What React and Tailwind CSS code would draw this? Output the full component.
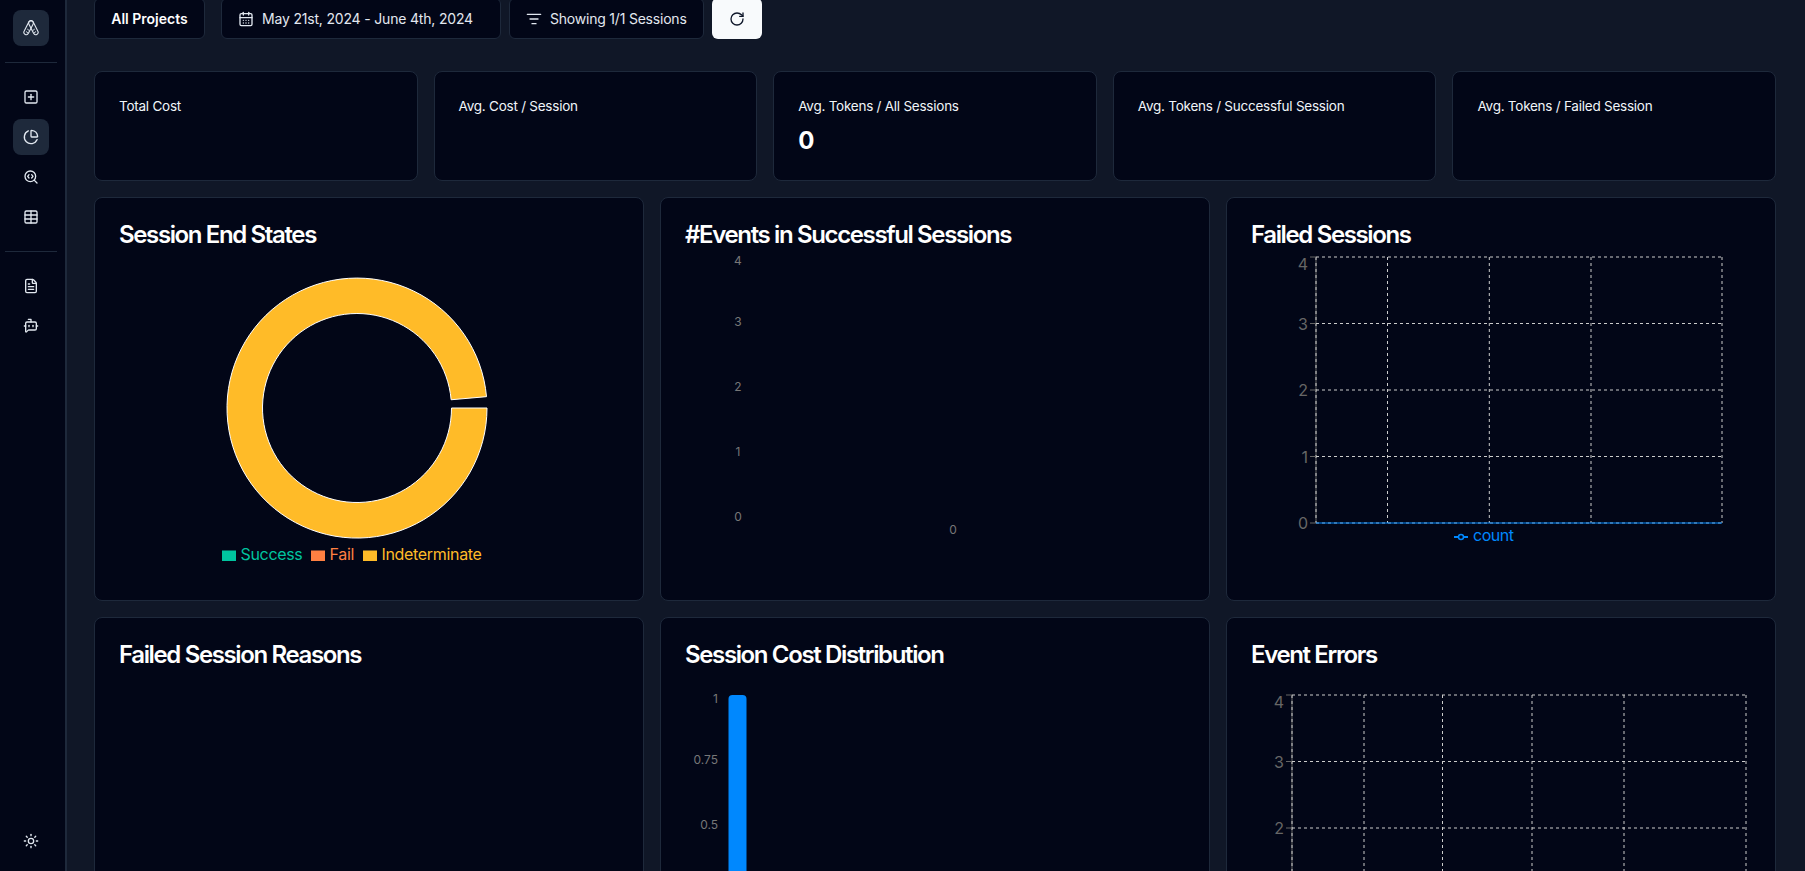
import React from 'react';
import {
    SquarePlus,
    ChartPie,
    SearchCode,
    Table,
    FileText,
    BotMessageSquare,
    Sun,
    CalendarDays,
    ListFilter,
    RotateCw,
} from 'lucide-react';

function Logo() {
    return (
        <svg width="18" height="16" viewBox="0 0 18 16" fill="none" stroke="#e2e8f0" strokeWidth="1.1">
            <rect x="6.6" y="0.8" width="4.8" height="15" rx="2.4" transform="rotate(27 9 3)" />
            <rect x="6.6" y="0.8" width="4.8" height="15" rx="2.4" transform="rotate(-27 9 3)" />
            <path d="M4 11.5 L6 13 M5.2 9 L7.2 10.5 M14 11.5 L12 13 M12.8 9 L10.8 10.5" strokeWidth="0.9" />
        </svg>
    );
}

function NavItem({ icon: Icon, active }) {
    return (
        <div className={`w-9 h-9 rounded-lg flex items-center justify-center text-slate-200 ${active ? 'bg-[#1e293b]' : ''}`}>
            <Icon size={16} />
        </div>
    );
}

function Sidebar() {
    return (
        <aside className="w-[67px] shrink-0 h-full bg-[#020617] border-r-2 border-[#1e293b] flex flex-col items-center pr-[3px]">
            <div className="w-9 h-9 mt-2.5 rounded-lg bg-[#1e293b] flex items-center justify-center">
                <Logo />
            </div>
            <div className="w-[52px] h-px bg-[#1e293b] mt-4 mb-4" />
            <div className="flex flex-col gap-1">
                <NavItem icon={SquarePlus} />
                <NavItem icon={ChartPie} active />
                <NavItem icon={SearchCode} />
                <NavItem icon={Table} />
            </div>
            <div className="w-[52px] h-px bg-[#1e293b] mt-4 mb-4" />
            <div className="flex flex-col gap-1">
                <NavItem icon={FileText} />
                <NavItem icon={BotMessageSquare} />
            </div>
            <div className="mt-auto mb-3">
                <NavItem icon={Sun} />
            </div>
        </aside>
    );
}

function ToolButton({ className = '', children }) {
    return (
        <div className={`h-[41px] flex items-center whitespace-nowrap rounded-md border border-[#1e293b] bg-[#020617] text-sm text-slate-200 ${className}`}>
            {children}
        </div>
    );
}

function Toolbar() {
    return (
        <div className="flex items-center -mt-0.5 mb-8">
            <ToolButton className="w-[111px] justify-center font-semibold text-white mr-4">All Projects</ToolButton>
            <ToolButton className="w-[280px] px-4 gap-2 mr-2 tracking-[-0.013em]">
                <CalendarDays size={16} />
                May 21st, 2024 - June 4th, 2024
            </ToolButton>
            <ToolButton className="w-[195px] px-4 gap-2 mr-2 tracking-[-0.015em]">
                <ListFilter size={16} />
                Showing 1/1 Sessions
            </ToolButton>
            <div className="w-[50px] h-[41px] rounded-md bg-[#f8fafc] text-[#0f172a] flex items-center justify-center">
                <RotateCw size={16} />
            </div>
        </div>
    );
}

function StatCard({ label, value }) {
    return (
        <div className="h-[110px] rounded-lg border border-[#1e293b] bg-[#020617] p-6">
            <div className="text-[13.5px] leading-5 font-normal tracking-[-0.018em] text-slate-100">{label}</div>
            {value && <div className="mt-[9px] text-2xl font-bold text-white">{value}</div>}
        </div>
    );
}

function ChartCard({ title, children }) {
    return (
        <div className="h-[404px] rounded-lg border border-[#1e293b] bg-[#020617] p-6">
            <h3 className="text-2xl leading-none pt-px -mb-px font-semibold tracking-[-0.057em] text-white">{title}</h3>
            {children}
        </div>
    );
}

// chart svgs use page coordinates through the viewBox
function ChartSvg({ x, y, children }) {
    return (
        <svg width="499" height="340" viewBox={`${x} ${y} 499 340`} className="block overflow-visible">
            {children}
        </svg>
    );
}

function Donut() {
    return (
        <ChartSvg x={119} y={245.5}>
            <path
                d="M487 407.5 A130 130 0 1 1 486.5 396.17 L451.14 399.26 A94.5 94.5 0 1 0 451.5 407.5 Z"
                fill="#FFBB28"
                stroke="#fff"
                strokeWidth="1"
            />
            <g fontSize="16" letterSpacing="-0.32">
                <rect x="222" y="550" width="14" height="10.5" fill="#00C49F" />
                <text x="240.5" y="559" fill="#00C49F">Success</text>
                <rect x="311" y="550" width="14" height="10.5" fill="#FF8042" />
                <text x="329.5" y="559" fill="#FF8042">Fail</text>
                <rect x="363" y="550" width="14" height="10.5" fill="#FFBB28" />
                <text x="381.5" y="559" fill="#FFBB28">Indeterminate</text>
            </g>
        </ChartSvg>
    );
}

function EventsChart() {
    const ticks = [
        ['4', 265],
        ['3', 326],
        ['2', 391],
        ['1', 456],
        ['0', 521],
    ];
    return (
        <ChartSvg x={685} y={246}>
            <g fontSize="12" fill="#777" textAnchor="middle">
                {ticks.map(([label, y]) => (
                    <text key={label} x="738" y={y}>{label}</text>
                ))}
                <text x="953" y="534">0</text>
            </g>
        </ChartSvg>
    );
}

function GridChart({ left, right, xs, ys, labels, count }) {
    const bottom = ys[ys.length - 1];
    return (
        <>
            <line x1={left} x2={left} y1={ys[0]} y2={bottom} stroke="#666" />
            {ys.map((y) => (
                <line key={y} x1={left} x2={right} y1={y} y2={y} stroke="#ccc" strokeDasharray="3 3" />
            ))}
            {xs.map((x) => (
                <line key={x} x1={x} x2={x} y1={ys[0]} y2={bottom} stroke="#ccc" strokeDasharray="3 3" />
            ))}
            <g fontSize="16" fill="#666" textAnchor="end">
                {labels.map(([label, y]) => (
                    <text key={label} x={left - 8} y={y}>{label}</text>
                ))}
            </g>
            {ys.map((y) => (
                <line key={`t${y}`} x1={left - 6} x2={left} y1={y} y2={y} stroke="#666" />
            ))}
            {count && (
                <>
                    <line x1={left} x2={right} y1={bottom} y2={bottom} stroke="#0088FE" strokeWidth="1.2" />
                    <line x1="1454" x2="1468" y1="537" y2="537" stroke="#0088FE" strokeWidth="2" />
                    <circle cx="1461" cy="537" r="2.5" fill="#020617" stroke="#0088FE" strokeWidth="1.5" />
                    <text x="1473" y="541" fontSize="16" letterSpacing="-0.45" fill="#0088FE">count</text>
                </>
            )}
        </>
    );
}

function CostChart() {
    const ticks = [
        ['1', 703],
        ['0.75', 764],
        ['0.5', 829],
    ];
    return (
        <ChartSvg x={685} y={666}>
            <g fontSize="12" fill="#777" textAnchor="end">
                {ticks.map(([label, y]) => (
                    <text key={label} x="718" y={y}>{label}</text>
                ))}
            </g>
            <path d="M728.5 960 V699 Q728.5 695 732.5 695 H742.5 Q746.5 695 746.5 699 V960 Z" fill="#0088FE" />
        </ChartSvg>
    );
}

export default function App() {
    return (
        <div className="flex h-screen overflow-hidden bg-[#101727] font-[Inter,sans-serif]">
            <Sidebar />
            <main className="flex-1 min-w-0 pl-[27px] pr-[29px]">
                <Toolbar />
                <div className="grid grid-cols-5 gap-4 mb-4">
                    <StatCard label="Total Cost" />
                    <StatCard label="Avg. Cost / Session" />
                    <StatCard label="Avg. Tokens / All Sessions" value="0" />
                    <StatCard label="Avg. Tokens / Successful Session" />
                    <StatCard label="Avg. Tokens / Failed Session" />
                </div>
                <div className="grid grid-cols-3 gap-4">
                    <ChartCard title="Session End States">
                        <Donut />
                    </ChartCard>
                    <ChartCard title="#Events in Successful Sessions">
                        <EventsChart />
                    </ChartCard>
                    <ChartCard title="Failed Sessions">
                        <ChartSvg x={1251} y={246}>
                            <GridChart
                                left={1316}
                                right={1722}
                                xs={[1316, 1387.5, 1489.3, 1591, 1722]}
                                ys={[257, 323.5, 390, 456.5, 523]}
                                labels={[['4', 270], ['3', 329.5], ['2', 396], ['1', 462.5], ['0', 529]]}
                                count
                            />
                        </ChartSvg>
                    </ChartCard>
                    <ChartCard title="Failed Session Reasons" />
                    <ChartCard title="Session Cost Distribution">
                        <CostChart />
                    </ChartCard>
                    <ChartCard title="Event Errors">
                        <ChartSvg x={1251} y={666}>
                            <GridChart
                                left={1292}
                                right={1746}
                                xs={[1292, 1364, 1442.5, 1532, 1624, 1746]}
                                ys={[695, 761.5, 828, 894.5]}
                                labels={[['4', 708], ['3', 767.5], ['2', 834], ['1', 900.5]]}
                            />
                        </ChartSvg>
                    </ChartCard>
                </div>
            </main>
        </div>
    );
}
